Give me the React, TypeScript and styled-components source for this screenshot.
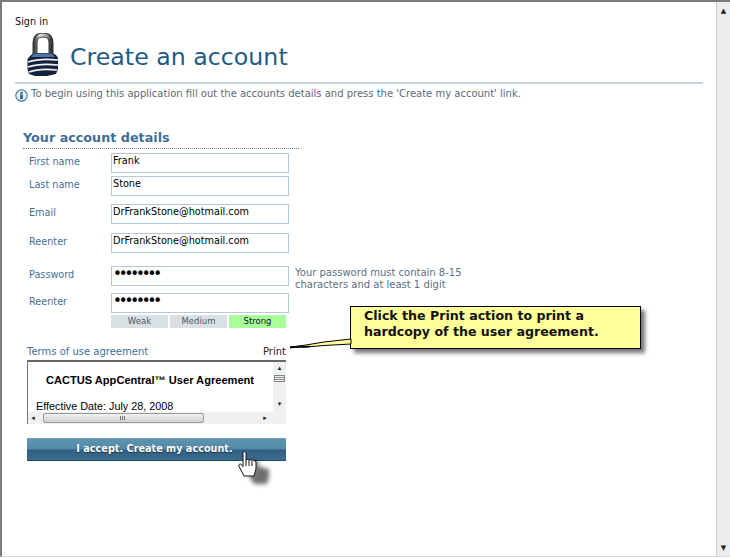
import React from 'react';
import styled, {createGlobalStyle} from "styled-components";

const GlobalStyle = createGlobalStyle`
  html, body {
    margin: 0;
    padding: 0;
    background: #fff;
  }
  body {
    font-family: "DejaVu Sans", Verdana, sans-serif;
    font-size: 9.7px;
    overflow: hidden;
  }
`;

const LockIcon = () => (
    <svg width="32" height="44" viewBox="0 0 32 44">
        <defs>
            <linearGradient id="shackle" x1="0" x2="1" y1="0" y2="0">
                <stop offset="0" stopColor="#444"/>
                <stop offset="0.3" stopColor="#e4e4e4"/>
                <stop offset="0.75" stopColor="#999"/>
                <stop offset="1" stopColor="#333"/>
            </linearGradient>
        </defs>
        <path d="M8 22 V10 C8 4 11 2 16 2 C21 2 24 4 24 10 V22" fill="none" stroke="#333" strokeWidth="5"/>
        <path d="M8 22 V10 C8 4 11 2 16 2 C21 2 24 4 24 10 V22" fill="none" stroke="url(#shackle)" strokeWidth="3"/>
        <path d="M4 22 L7 20 H25 L29 22 L31 25 V36 L29 41 L20 43 H8 L2 41 L0.5 36 V26 Z" fill="#14213a"/>
        <path d="M7 20.5 H25 L28 24 H4 Z" fill="#4f73a8"/>
        <path d="M1 29 C10 26 22 26 31 27" fill="none" stroke="#eef1f4" strokeWidth="1.7"/>
        <path d="M1 34 C10 31 22 31 31 32" fill="none" stroke="#eef1f4" strokeWidth="1.7"/>
        <path d="M2 39 C10 36 22 36 30 37" fill="none" stroke="#eef1f4" strokeWidth="1.7"/>
    </svg>
);

const InfoIcon = () => (
    <svg width="13" height="13" viewBox="0 0 13 13">
        <circle cx="6.5" cy="6.5" r="5.7" fill="#eaf2f8" stroke="#4f86a8" strokeWidth="1.2"/>
        <rect x="5" y="3" width="3" height="1.6" fill="#3b6f92"/>
        <rect x="5" y="5.4" width="3" height="4.8" fill="#3b6f92"/>
    </svg>
);

const HandCursor = () => (
    <svg width="36" height="38" viewBox="0 0 36 38">
        <defs>
            <filter id="handBlur" x="-30%" y="-30%" width="160%" height="160%"><feGaussianBlur stdDeviation="2"/></filter>
        </defs>
        <path d="M11 8 V17 L6 14 L5 17 L11 27 H24 L26 20 V12 L21 11 L15 9 V2 H11 Z" transform="translate(5 6)" fill="#333" opacity="0.7" filter="url(#handBlur)"/>
        <path d="M5 1.5 C5 0.5 8 0.5 8 1.5 V9 L10 8 L12.5 9 L15 9 L18 10.5 V18 L16 25 H6 L0.8 15 C0.5 13 2.5 12.5 3.5 13.5 L5 15.5 Z" fill="#fff" stroke="#111" strokeWidth="1"/>
        <path d="M8 9 V15 M11 9 V15 M14 10 V15" stroke="#111" strokeWidth="1"/>
    </svg>
);

const CalloutTail = () => (
    <svg width="66" height="22" viewBox="0 0 66 22">
        <path d="M2 20 L18 18 L36 15 L63 12 V17 L36 18.5 L18 20 Z" fill="#ffff99" stroke="#000" strokeWidth="1"/>
        <path d="M2 20.5 L22 19.5" stroke="#000" strokeWidth="1.4"/>
    </svg>
);

const formFields = [
    {label: "First name", value: "Frank", gap: 3},
    {label: "Last name", value: "Stone", gap: 8},
    {label: "Email", value: "DrFrankStone@hotmail.com", gap: 9},
    {label: "Reenter", value: "DrFrankStone@hotmail.com", gap: 13},
];

export default function App() {
    return (
        <Window>
            <GlobalStyle/>
            <Page>
                <SignIn>Sign in</SignIn>
                <Header>
                    <LockBox><LockIcon/></LockBox>
                    <Title>Create an account</Title>
                </Header>
                <Intro>
                    <InfoIcon/>
                    <span>To begin using this application fill out the accounts details and press the 'Create my account' link.</span>
                </Intro>

                <Form>
                    <SectionTitle>Your account details</SectionTitle>
                    {formFields.map(field => (
                        <Row key={field.label + field.gap} $gap={field.gap}>
                            <Label>{field.label}</Label>
                            <Input>{field.value}</Input>
                        </Row>
                    ))}
                    <Row $gap={7}>
                        <Label>Password</Label>
                        <Input $dots>••••••••</Input>
                        <Hint>Your password must contain 8-15<br/>characters and at least 1 digit</Hint>
                    </Row>
                    <Row $gap={2}>
                        <Label>Reenter</Label>
                        <Input $dots>••••••••</Input>
                    </Row>
                    <Strength>
                        <StrengthItem>Weak</StrengthItem>
                        <StrengthItem>Medium</StrengthItem>
                        <StrengthItem $active>Strong</StrengthItem>
                    </Strength>

                    <Terms>
                        <TermsHead>
                            <TermsLabel>Terms of use agreement</TermsLabel>
                            <PrintLink>Print</PrintLink>
                        </TermsHead>
                        <TermsBox>
                            <TermsText>
                                <TermsTitle>CACTUS AppCentral™ User Agreement</TermsTitle>
                                <TermsDate>Effective Date: July 28, 2008</TermsDate>
                            </TermsText>
                            <VScroll>
                                <Arrow>▴</Arrow>
                                <VThumb/>
                                <Arrow $bottom>▾</Arrow>
                            </VScroll>
                            <HScroll>
                                <Arrow>◂</Arrow>
                                <HThumb/>
                                <Arrow>▸</Arrow>
                            </HScroll>
                        </TermsBox>
                        <AcceptButton>I accept. Create my account.</AcceptButton>
                    </Terms>
                </Form>
            </Page>

            <Scrollbar>
                <ScrollArrow>▲</ScrollArrow>
                <ScrollArrow>▼</ScrollArrow>
            </Scrollbar>

            <Callout>
                <TailWrap><CalloutTail/></TailWrap>
                Click the Print action to print a<br/>hardcopy of the user agreement.
            </Callout>
            <HandWrap><HandCursor/></HandWrap>
        </Window>
    );
}

const Window = styled.div`
  position: relative;
  display: flex;
  width: 730px;
  height: 557px;
  box-sizing: border-box;
  overflow: hidden;
  border-top: 2px solid #7a7a7a;
  border-left: 2px solid #7a7a7a;
  border-bottom: 1px solid #d8d8d8;
  background: #fff;
`;

const Page = styled.main`
  flex: 1;
  min-width: 0;
  padding: 14px 13px 0 13px;
`;

const SignIn = styled.div`
  height: 12px;
  line-height: 12px;
  color: #111;
`;

const Header = styled.header`
  display: flex;
  align-items: flex-start;
  height: 54px;
  border-bottom: 2px solid #c4d2de;
`;

const LockBox = styled.div`
  width: 55px;
  padding: 5px 0 0 12px;
  box-sizing: border-box;
`;

const Title = styled.h1`
  margin: 14px 0 0 0;
  line-height: 30px;
  font-size: 23.7px;
  font-weight: 400;
  color: #1f5a85;
`;

const Intro = styled.p`
  display: flex;
  align-items: flex-start;
  gap: 3px;
  margin: 4px 0 0 0;
  line-height: 12px;
  font-size: 10px;
  color: #5a6a78;

  svg {
    margin-top: 1px;
    flex: none;
  }
`;

const Form = styled.section`
  width: 276px;
  margin: 28px 0 0 8px;
`;

const SectionTitle = styled.h2`
  margin: 0 0 4px 0;
  padding: 0 0 3px 0;
  line-height: 15px;
  font-size: 12.75px;
  font-weight: 700;
  color: #3f6f98;
  border-bottom: 1px dotted #777;
`;

const Row = styled.div<{$gap: number}>`
  position: relative;
  display: flex;
  align-items: center;
  margin-bottom: ${props => props.$gap}px;
`;

const Label = styled.label`
  width: 88px;
  padding-left: 6px;
  box-sizing: border-box;
  color: #3f6f98;
  position: relative;
  top: -2px;
`;

const Input = styled.div<{$dots?: boolean}>`
  width: 178px;
  height: 20px;
  line-height: ${props => props.$dots ? "15px" : "14px"};
  padding: 0 1px;
  box-sizing: border-box;
  border: 1px solid #b4c8e0;
  overflow: hidden;
  font-size: ${props => props.$dots ? "15px" : "9.7px"};
  letter-spacing: ${props => props.$dots ? "-3.1px" : "0"};
  color: #000;
`;

const Hint = styled.div`
  position: absolute;
  left: 272px;
  top: 1px;
  width: 190px;
  line-height: 12px;
  font-size: 10px;
  color: #5a6f7f;
`;

const Strength = styled.div`
  display: flex;
  gap: 2px;
  width: 175px;
  margin-left: 88px;
`;

const StrengthItem = styled.div<{$active?: boolean}>`
  flex: 1;
  height: 13px;
  line-height: 13px;
  text-align: center;
  font-size: 8.5px;
  background: ${props => props.$active ? "#a8ff98" : "#d8e0e4"};
  color: ${props => props.$active ? "#113" : "#556"};
`;

const Terms = styled.div`
  width: 259px;
  margin: 18px 0 0 4px;
`;

const TermsHead = styled.div`
  display: flex;
  justify-content: space-between;
  line-height: 12px;
  font-size: 10px;
`;

const TermsLabel = styled.span`
  color: #3f6f98;
`;

const PrintLink = styled.a`
  color: #3a2020;
`;

const TermsBox = styled.div`
  display: grid;
  grid-template-columns: 1fr 13px;
  grid-template-rows: 50px 12px;
  height: 64px;
  margin-top: 2px;
  box-sizing: border-box;
  border-top: 2px solid #666;
  border-left: 1px solid #777;
  overflow: hidden;
`;

const TermsText = styled.div`
  padding: 11px 0 0 8px;
  overflow: hidden;
  font-family: "Liberation Sans", Arial, sans-serif;
  color: #000;
`;

const TermsTitle = styled.div`
  text-align: center;
  font-size: 11.1px;
  font-weight: 700;
  line-height: 14px;
  padding-right: 9px;
`;

const TermsDate = styled.div`
  margin-top: 12px;
  font-size: 10.8px;
  line-height: 14px;
`;

const VScroll = styled.div`
  grid-row: 1 / 3;
  grid-column: 2;
  display: flex;
  flex-direction: column;
  align-items: center;
  padding: 1px 0 15px 0;
  background: #f0f0f0;
`;

const VThumb = styled.div`
  width: 11px;
  height: 7px;
  margin-top: 2px;
  border: 1px solid #888;
  box-sizing: border-box;
  background: repeating-linear-gradient(#f4f4f4 0, #f4f4f4 1px, #888 1px, #888 2px);
`;

const HScroll = styled.div`
  grid-row: 2;
  grid-column: 1;
  display: flex;
  align-items: center;
  padding-right: 3px;
  background: #f0f0f0;
`;

const HThumb = styled.div`
  position: relative;
  width: 161px;
  height: 10px;
  margin: 0 auto 0 5px;
  box-sizing: border-box;
  border: 1px solid #999;
  border-radius: 2px;
  background: linear-gradient(#f2f2f2, #d0d0d0);

  &::after {
    content: "";
    position: absolute;
    left: 76px;
    top: 2px;
    width: 5px;
    height: 4px;
    background: repeating-linear-gradient(90deg, #777 0, #777 1px, transparent 1px, transparent 2px);
  }
`;

const Arrow = styled.span<{$bottom?: boolean}>`
  width: 10px;
  margin-top: ${props => props.$bottom ? "auto" : "0"};
  line-height: 10px;
  text-align: center;
  font-size: 7px;
  color: #222;
`;

const AcceptButton = styled.button`
  display: block;
  width: 259px;
  height: 23px;
  margin-top: 14px;
  padding: 0 4px 3px 0;
  border: none;
  border-top: 1px solid #6fa0ba;
  border-bottom: 1px solid #1e4a6a;
  background: linear-gradient(#5f94b0 0%, #5189a6 48%, #2f5f84 52%, #3d6c90 100%);
  font-family: "DejaVu Sans", Verdana, sans-serif;
  font-size: 9.7px;
  font-weight: 700;
  color: #fff;
  text-shadow: 0 1px 1px #234;
`;

const Scrollbar = styled.aside`
  display: flex;
  flex: none;
  flex-direction: column;
  justify-content: space-between;
  align-items: center;
  width: 13px;
  padding: 1px 0 0 0;
  border-left: 1px solid #ccc;
  background: #ececec;
`;

const ScrollArrow = styled.span`
  padding: 3px 0;
  font-size: 7px;
  line-height: 10px;
  color: #222;
`;

const Callout = styled.div`
  position: absolute;
  left: 348px;
  top: 304px;
  width: 291px;
  height: 43px;
  padding: 1px 0 0 13px;
  box-sizing: border-box;
  border: 1px solid #000;
  background: #ffff99;
  box-shadow: 4px 4px 4px #777;
  font-size: 12.6px;
  font-weight: 700;
  line-height: 16px;
  color: #111;
`;

const TailWrap = styled.div`
  position: absolute;
  left: -63px;
  top: 20px;
  line-height: 0;
`;

const HandWrap = styled.div`
  position: absolute;
  left: 236px;
  top: 449px;
  line-height: 0;
`;
